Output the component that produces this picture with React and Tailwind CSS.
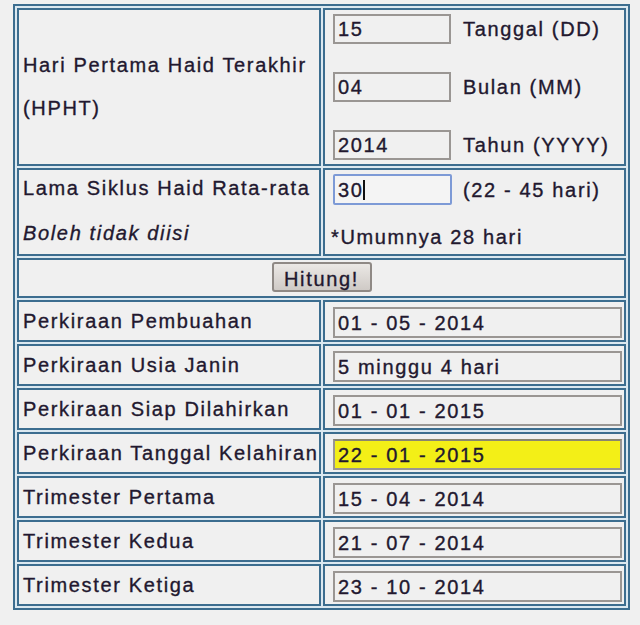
export default function App() {
  const results = [
    ["Perkiraan Pembuahan", "01 - 05 - 2014", false],
    ["Perkiraan Usia Janin", "5 minggu 4 hari", false],
    ["Perkiraan Siap Dilahirkan", "01 - 01 - 2015", false],
    ["Perkiraan Tanggal Kelahiran", "22 - 01 - 2015", true],
    ["Trimester Pertama", "15 - 04 - 2014", false],
    ["Trimester Kedua", "21 - 07 - 2014", false],
    ["Trimester Ketiga", "23 - 10 - 2014", false],
  ];

  const cell = "border-2 border-[#3c6d8f] bg-[#f0f0f0]";
  const box = "h-[30px] border-2 border-[#9a9693] bg-[#f0f0f0] px-[3px] flex items-center";

  return (
    <div
      className="min-h-[625px] bg-[#f0f0f0] pt-[4px] pl-[13px] text-[20px] tracking-[1.65px] text-[#22182f] [-webkit-text-stroke:0.35px_#22182f]"
      style={{ fontFamily: '"Liberation Sans", Arial, sans-serif' }}
    >
      <div className="w-[617px] border-2 border-[#3c6d8f] bg-[#dbe8f0] p-[2px]">
        <div className="grid grid-cols-[304px_303px] gap-[2px]">
          {/* HPHT */}
          <div className={`${cell} h-[158px] flex items-center pl-[4px] leading-[43px]`}>
            <div>
              Hari Pertama Haid Terakhir
              <br />
              (HPHT)
            </div>
          </div>
          <div className={`${cell} h-[158px] flex flex-col justify-between py-[4px] pl-[8px]`}>
            {[
              ["15", "Tanggal (DD)"],
              ["04", "Bulan (MM)"],
              ["2014", "Tahun (YYYY)"],
            ].map(([v, l]) => (
              <div key={l} className="flex items-center gap-[12px]">
                <div className={`${box} w-[118px]`}>{v}</div>
                <span>{l}</span>
              </div>
            ))}
          </div>

          {/* Siklus */}
          <div className={`${cell} h-[88px] flex flex-col pl-[4px] pt-[7px] gap-[22px] leading-[23px]`}>
            <div>Lama Siklus Haid Rata-rata</div>
            <div className="italic">Boleh tidak diisi</div>
          </div>
          <div className={`${cell} h-[88px] flex flex-col pt-[4px] pl-[6px]`}>
            <div className="flex items-center gap-[11px] pl-[2px]">
              <div className="h-[31px] w-[119px] border-2 border-[#7d9ad6] rounded-[2px] bg-[#f4f4f4] px-[3px] flex items-center">
                30<span className="ml-[-1px] inline-block h-[20px] w-[2px] bg-[#111]" />
              </div>
              <span>(22 - 45 hari)</span>
            </div>
            <div className="mt-[21px] leading-[23px]">*Umumnya 28 hari</div>
          </div>

          {/* Hitung */}
          <div className={`${cell} col-span-2 h-[40px] flex justify-center pt-[2px]`}>
            <button className="h-[30px] w-[100px] rounded-[3px] border-2 border-[#8f8985] bg-gradient-to-b from-[#ebe8e5] to-[#cfcac6] text-[20px] tracking-[1.65px] text-[#22182f]">
              Hitung!
            </button>
          </div>

          {/* Results */}
          {results.map(([label, value, hl]) => (
            <div key={label} className="contents">
              <div className={`${cell} h-[42px] flex items-center pl-[4px] whitespace-nowrap overflow-hidden`}>
                {label}
              </div>
              <div className={`${cell} h-[42px] flex items-end pb-[2px] pl-[8px] pr-[2px]`}>
                <div
                  className={`h-[31px] w-full border-2 border-[#9a9693] px-[3px] flex items-center ${
                    hl ? "bg-[#f3ef17] border-t-[#8a8670]" : "bg-[#f0f0f0]"
                  }`}
                >
                  {value}
                </div>
              </div>
            </div>
          ))}
        </div>
      </div>
    </div>
  );
}
